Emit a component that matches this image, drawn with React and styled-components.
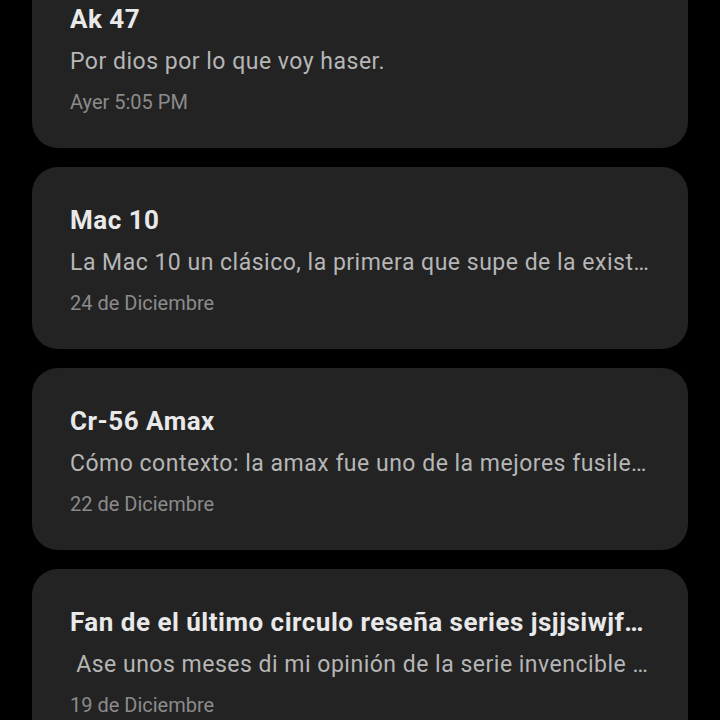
import styled, { createGlobalStyle } from "styled-components";

const GlobalStyle = createGlobalStyle`
  html, body {
    margin: 0;
    padding: 0;
    background: #000;
  }
  body {
    font-family: Roboto, "Noto Sans", "Liberation Sans", sans-serif;
  }
`;

const notes = [
  {
    title: "Ak 47",
    snippet: "Por dios por lo que voy haser.",
    date: "Ayer 5:05 PM",
  },
  {
    title: "Mac 10",
    snippet:
      "La Mac 10 un clásico, la primera que supe de la existencia de este subfusil",
    date: "24 de Diciembre",
  },
  {
    title: "Cr-56 Amax",
    snippet:
      "Cómo contexto: la amax fue uno de la mejores fusiles de asalto del juego",
    date: "22 de Diciembre",
  },
  {
    title: "Fan de el último circulo reseña series jsjjsiwjfjsjdj",
    snippet:
      " Ase unos meses di mi opinión de la serie invencible y ahora vuelvo",
    date: "19 de Diciembre",
  },
];

const App = () => {
  return (
    <>
      <GlobalStyle />
      <Screen>
        <List>
          {notes.map((note) => (
            <Card key={note.title}>
              <Title>{note.title}</Title>
              <Snippet>{note.snippet}</Snippet>
              <DateText>{note.date}</DateText>
            </Card>
          ))}
        </List>
      </Screen>
    </>
  );
};

const Screen = styled.div`
  width: 720px;
  height: 720px;
  overflow: hidden;
  background: #000;
`;

const List = styled.div`
  display: flex;
  flex-direction: column;
  gap: 19px;
  padding: 0 32px;
  margin-top: -34px;
`;

const Card = styled.div`
  height: 182px;
  box-sizing: border-box;
  background: #232323;
  border-radius: 26px;
  padding: 35px 38px 0;
  display: flex;
  flex-direction: column;
`;

const Line = styled.div`
  white-space: nowrap;
  overflow: hidden;
  text-overflow: ellipsis;
`;

const Title = styled(Line)`
  font-size: 26px;
  line-height: 36px;
  font-weight: 700;
  letter-spacing: 0.5px;
  color: #e9e9e9;
`;

const Snippet = styled(Line)`
  margin-top: 10px;
  font-size: 23px;
  line-height: 30px;
  letter-spacing: 0.5px;
  color: #b6b6b6;
  white-space: pre;
`;

const DateText = styled(Line)`
  margin-top: 12px;
  font-size: 20px;
  line-height: 26px;
  color: #8b8b8b;
`;

export default App;
